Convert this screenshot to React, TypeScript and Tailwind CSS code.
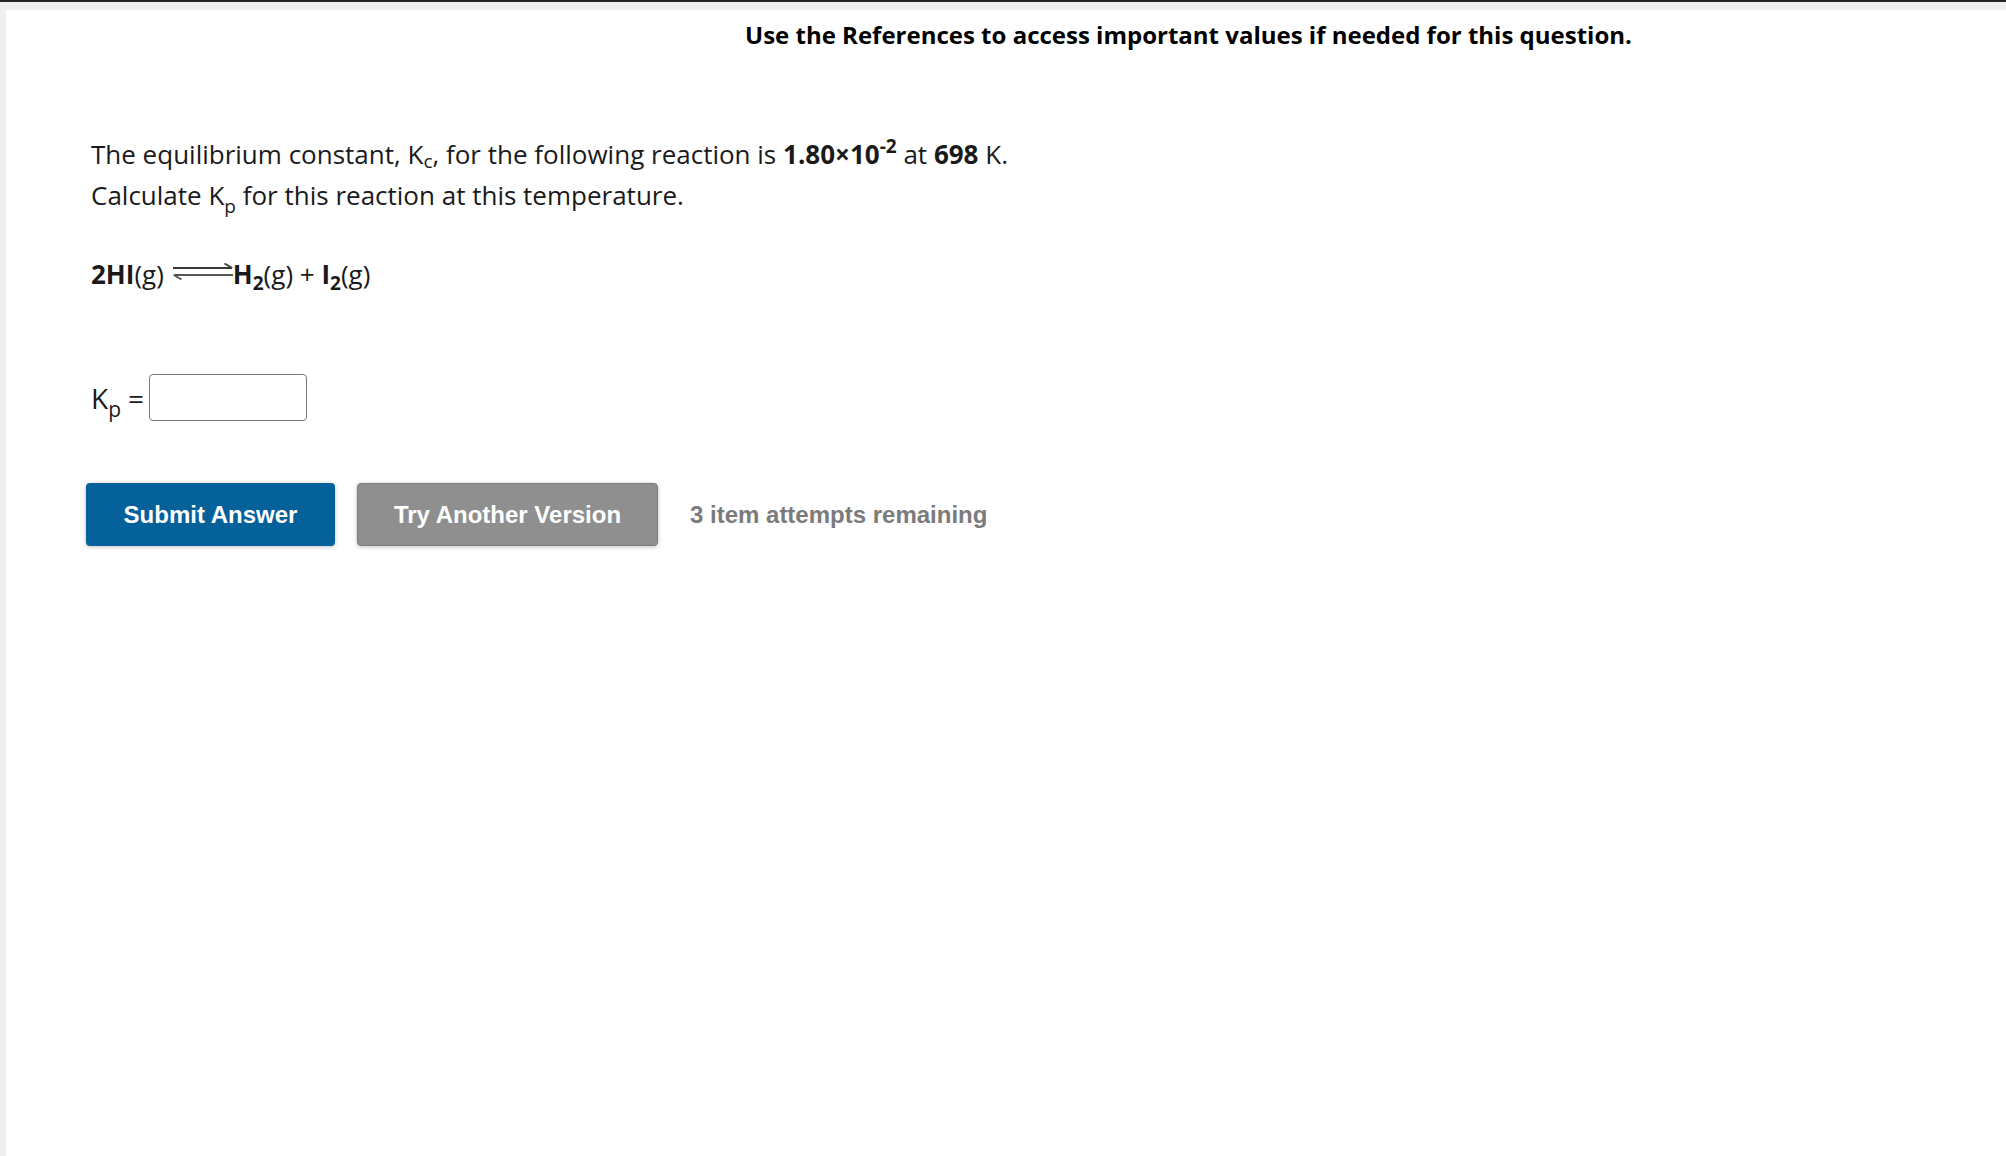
import React from "react";

function EqArrow() {
  return (
    <svg width="60" height="18" viewBox="0 0 60 18" className="block" aria-hidden>
      <line x1="0" y1="5" x2="59" y2="5" stroke="#3a3a3a" strokeWidth="1.8" />
      <line x1="59.2" y1="5" x2="51.5" y2="0.5" stroke="#3a3a3a" strokeWidth="1.8" />
      <line x1="0.8" y1="12" x2="60" y2="12" stroke="#555" strokeWidth="1.8" />
      <line x1="0.8" y1="12" x2="8.5" y2="16.5" stroke="#555" strokeWidth="1.8" />
    </svg>
  );
}

export default function App() {
  const os = { fontFamily: '"Open Sans", "Noto Sans", sans-serif' } as React.CSSProperties;
  return (
    <div className="min-h-[1156px] w-full bg-[#efefef]">
      <div className="h-[2px] bg-[#262626]" />
      <div className="pt-[8px] pl-[6px]">
        <div className="min-h-[1146px] bg-white text-[#111]" style={os}>
          <div className="pt-[10px] pl-[739px] text-[24px] leading-[30px] font-bold text-black">
            Use the References to access important values if needed for this question.
          </div>

          <div className="pl-[80px]">
            <div className="mt-[84px] pl-[5px] text-[26px] leading-[41px] text-[#1a1a1a]">
              <div>
                The equilibrium constant, K<sub className="text-[19px] relative top-[4px] align-baseline">c</sub>, for the following reaction is{" "}
                <span className="font-bold">1.80×10<sup className="text-[19px] align-baseline relative top-[-11px]">-2</sup></span> at{" "}
                <span className="font-bold">698</span> K.
              </div>
              <div>
                Calculate K<sub className="text-[19px] align-baseline relative top-[8px]">p</sub> for this reaction at this temperature.
              </div>
            </div>

            <div className="mt-[38px] pl-[5px] text-[26px] leading-[41px] text-[#1a1a1a] flex items-center">
              <span><span className="font-bold">2HI</span>(g)</span>
              <span className="ml-[9px] relative top-[-3px]"><EqArrow /></span>
              <span>
                <span className="font-bold">H<sub className="text-[19px] align-baseline relative top-[6px]">2</sub></span>(g) + <span className="font-bold">I<sub className="text-[19px] align-baseline relative top-[6px]">2</sub></span>(g)
              </span>
            </div>

            <div className="mt-[79px] pl-[5px] flex items-center text-[28px] text-[#1a1a1a]">
              <span>K<sub className="text-[21px] align-baseline relative top-[8px]">p</sub></span>
              <span className="ml-[7px]">=</span>
              <input className="ml-[5px] w-[158px] h-[47px] border-[1.5px] border-[#7a7a7a] rounded-[4px] bg-white outline-none" />
            </div>

            <div className="mt-[62px] flex items-center gap-[22px]" style={{ fontFamily: '"Liberation Sans", Arial, sans-serif' }}>
              <button className="w-[249px] h-[63px] rounded-[4px] bg-[#04619a] text-white font-bold text-[24px] shadow-[0_1px_4px_rgba(0,0,0,0.25)]">
                Submit Answer
              </button>
              <button className="w-[301px] h-[63px] rounded-[4px] bg-[#8f8f8f] border border-[#7c7c7c] text-white font-bold text-[24px] shadow-[0_1px_4px_rgba(0,0,0,0.25)]">
                Try Another Version
              </button>
              <span className="ml-[10px] text-[24px] font-bold text-[#7b7b7b]">3 item attempts remaining</span>
            </div>
          </div>
        </div>
      </div>
    </div>
  );
}
